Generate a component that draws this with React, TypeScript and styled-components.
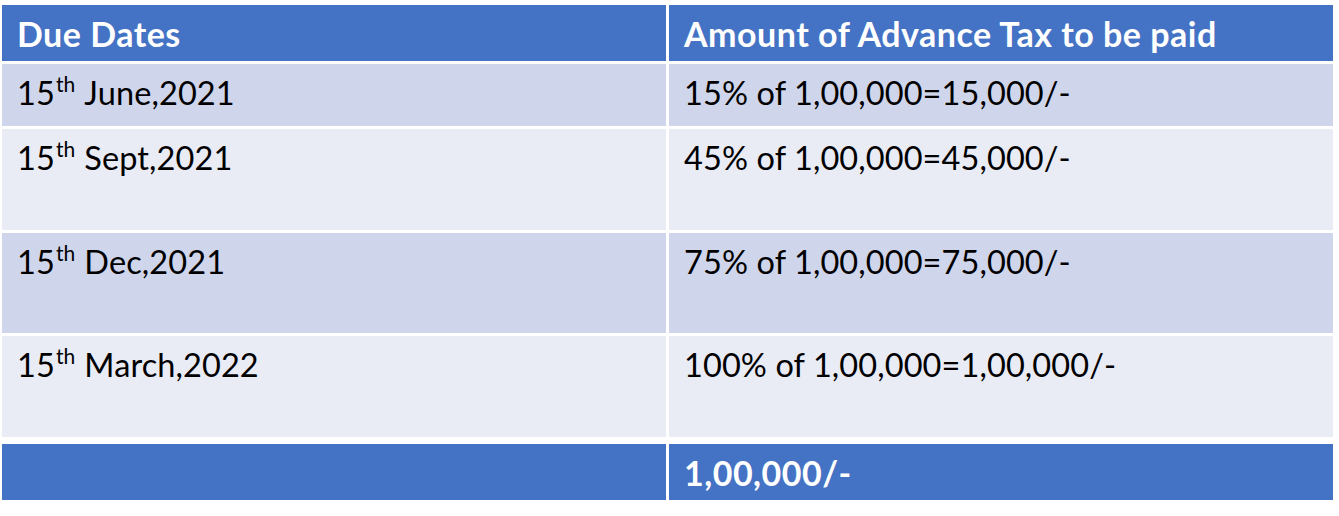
import React from "react";
import styled, { createGlobalStyle } from "styled-components";

const Global = createGlobalStyle`
  html, body { margin: 0; padding: 0; background: #ffffff; }
  body { font-family: Lato, "Liberation Sans", sans-serif; }
`;

const Page = styled.div`
  width: 1339px;
  height: 516px;
  padding: 5px 6px 0 2px;
  box-sizing: border-box;
  background: #fff;
`;

const Table = styled.div`
  display: grid;
  grid-template-columns: 664px 664px;
  grid-template-rows: 56px 62px 101px 100px 101px 56px;
  column-gap: 3px;
  row-gap: 3px;
`;

type Tone = "head" | "odd" | "even" | "foot";

const colors: Record<Tone, string> = {
  head: "#4472c4",
  foot: "#4472c4",
  odd: "#cfd5ea",
  even: "#e9ebf5",
};

const isBlue = (t: Tone) => t === "head" || t === "foot";

const Cell = styled.div<{ $tone: Tone }>`
  background: ${(p) => colors[p.$tone]};
  color: ${(p) => (isBlue(p.$tone) ? "#ffffff" : "#000000")};
  font-weight: ${(p) => (isBlue(p.$tone) ? 700 : 400)};
  font-size: ${(p) => (isBlue(p.$tone) ? "34px" : "32.5px")};
  letter-spacing: ${(p) => (isBlue(p.$tone) ? "0.5px" : "0.1px")};
  line-height: 38px;
  padding: ${(p) => (isBlue(p.$tone) ? "10px 15px" : "10px 15px")};
  box-sizing: border-box;
  white-space: nowrap;
`;

const FootCell = styled(Cell)`
  margin-top: 4px;
  height: 56px;
`;

const Sup = styled.sup`
  font-size: 21px;
  line-height: 0;
  vertical-align: 13px;
  margin-left: 1px;
  margin-right: 9px;
`;

const rows = [
  { day: "15", month: "June,2021", amt: "15% of 1,00,000=15,000/-", tone: "odd" as Tone },
  { day: "15", month: "Sept,2021", amt: "45% of 1,00,000=45,000/-", tone: "even" as Tone },
  { day: "15", month: "Dec,2021", amt: "75% of 1,00,000=75,000/-", tone: "odd" as Tone },
  { day: "15", month: "March,2022", amt: "100% of 1,00,000=1,00,000/-", tone: "even" as Tone },
];

export default function App() {
  return (
    <>
      <Global />
      <Page>
        <Table>
          <Cell $tone="head">Due Dates</Cell>
          <Cell $tone="head">Amount of Advance Tax to be paid</Cell>
          {rows.map((r) => (
            <React.Fragment key={r.month}>
              <Cell $tone={r.tone}>
                {r.day}
                <Sup>th</Sup>
                {r.month}
              </Cell>
              <Cell $tone={r.tone}>{r.amt}</Cell>
            </React.Fragment>
          ))}
          <FootCell $tone="foot" />
          <FootCell $tone="foot">1,00,000/-</FootCell>
        </Table>
      </Page>
    </>
  );
}
